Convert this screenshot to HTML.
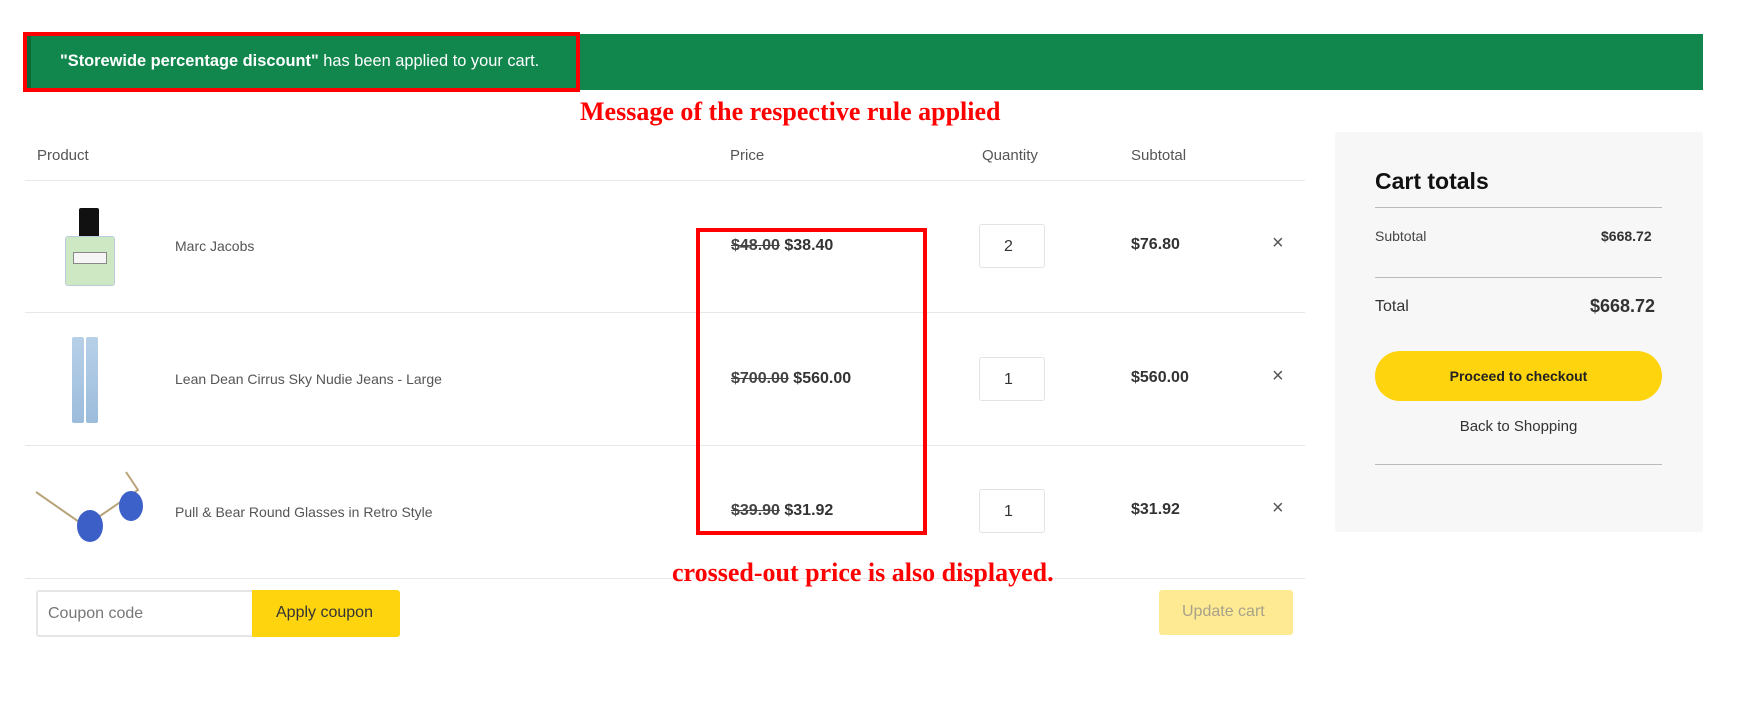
<!DOCTYPE html>
<html><head><meta charset="utf-8"><style>
*{box-sizing:border-box;margin:0;padding:0}
body{width:1757px;height:718px;background:#fff;font-family:"Liberation Sans",sans-serif;color:#444;position:relative;overflow:hidden}
.a{position:absolute;white-space:nowrap}
.bar{left:25px;top:34px;width:1678px;height:56px;background:#11864d;border-left:6px solid #0b6a3c}
.red{border:4px solid #f00}
.h{font-size:15px;color:#555;top:147px}
.line{position:absolute;height:1px;background:#e8e8e8}
.name{font-size:14px;color:#555}
.price{font-size:16px;font-weight:bold;color:#333}
.price s{color:#444}
.qty{width:66px;height:44px;border:1px solid #e3e3e3;border-radius:3px;font-size:16px;color:#333;padding:13px 0 0 24px}
.x{font-size:20px;color:#555}
.ann{font-family:"Liberation Serif",serif;font-weight:bold;color:#f00;font-size:26px}
</style></head><body>
<div class="a bar"></div>
<div class="a red" style="left:23px;top:32px;width:557px;height:60px"></div>
<div class="a" style="left:60px;top:52px;font-size:16.4px;color:#fff"><b>"Storewide percentage discount"</b> has been applied to your cart.</div>
<div class="a ann" style="left:580px;top:97px">Message of the respective rule applied</div>

<div class="a h" style="left:37px">Product</div>
<div class="a h" style="left:730px">Price</div>
<div class="a h" style="left:982px">Quantity</div>
<div class="a h" style="left:1131px">Subtotal</div>
<div class="line" style="left:25px;top:180px;width:1280px"></div>
<div class="line" style="left:25px;top:312px;width:1280px"></div>
<div class="line" style="left:25px;top:445px;width:1280px"></div>
<div class="line" style="left:25px;top:578px;width:1280px"></div>

<div class="a" style="left:79px;top:208px;width:20px;height:28px;background:#111;border-radius:2px 2px 0 0"></div>
<div class="a" style="left:65px;top:236px;width:50px;height:50px;background:#cfe8c4;border:1px solid #bcd;border-radius:3px"></div>
<div class="a" style="left:73px;top:252px;width:34px;height:12px;border:1px solid #888;background:#f5f5f5"></div>
<div class="a" style="left:72px;top:337px;width:12px;height:86px;background:linear-gradient(#b7d0e8,#9cbcdc);border-radius:2px"></div>
<div class="a" style="left:86px;top:337px;width:12px;height:86px;background:linear-gradient(#b7d0e8,#9cbcdc);border-radius:2px"></div>
<svg class="a" style="left:34px;top:468px" width="110" height="76"><path d="M2 24 L48 56 M66 48 L104 22 L92 4" stroke="#b9a47a" stroke-width="2" fill="none"/><ellipse cx="56" cy="58" rx="13" ry="16" fill="#3b5fc7"/><ellipse cx="97" cy="38" rx="12" ry="15" fill="#3c62c9"/></svg>

<div class="a name" style="left:175px;top:238px">Marc Jacobs</div>
<div class="a name" style="left:175px;top:371px">Lean Dean Cirrus Sky Nudie Jeans - Large</div>
<div class="a name" style="left:175px;top:504px">Pull &amp; Bear Round Glasses in Retro Style</div>

<div class="a price" style="left:731px;top:237px"><s>$48.00</s> $38.40</div>
<div class="a price" style="left:731px;top:370px"><s>$700.00</s> $560.00</div>
<div class="a price" style="left:731px;top:502px"><s>$39.90</s> $31.92</div>
<div class="a red" style="left:696px;top:228px;width:231px;height:307px"></div>

<div class="a qty" style="left:979px;top:224px">2</div>
<div class="a qty" style="left:979px;top:357px">1</div>
<div class="a qty" style="left:979px;top:489px">1</div>
<div class="a price" style="left:1131px;top:236px">$76.80</div>
<div class="a price" style="left:1131px;top:369px">$560.00</div>
<div class="a price" style="left:1131px;top:501px">$31.92</div>
<div class="a x" style="left:1272px;top:232px">×</div>
<div class="a x" style="left:1272px;top:365px">×</div>
<div class="a x" style="left:1272px;top:497px">×</div>

<div class="a ann" style="left:672px;top:558px">crossed-out price is also displayed.</div>

<div class="a" style="left:36px;top:590px;width:218px;height:47px;border:2px solid #e6e6e6;border-radius:3px 0 0 3px;font-size:16px;color:#777;padding:13px 0 0 10px">Coupon code</div>
<div class="a" style="left:252px;top:590px;width:148px;height:47px;background:#fed40f;border-radius:0 3px 3px 0;font-size:16px;color:#333;padding:14px 0 0 24px">Apply coupon</div>
<div class="a" style="left:1159px;top:590px;width:134px;height:45px;background:#ffea94;border-radius:3px;font-size:16px;color:#a8a28a;padding:13px 0 0 23px">Update cart</div>

<div class="a" style="left:1335px;top:132px;width:368px;height:400px;background:#f7f7f7;border-radius:3px"></div>
<div class="a" style="left:1375px;top:168px;font-size:23px;font-weight:bold;color:#111">Cart totals</div>
<div class="line" style="left:1375px;top:207px;width:287px;background:#bbb"></div>
<div class="a" style="left:1375px;top:228px;font-size:14px;color:#444">Subtotal</div>
<div class="a" style="left:1601px;top:228px;font-size:14px;font-weight:bold;color:#333">$668.72</div>
<div class="line" style="left:1375px;top:277px;width:287px;background:#bbb"></div>
<div class="a" style="left:1375px;top:298px;font-size:16px;color:#333">Total</div>
<div class="a" style="left:1590px;top:296px;font-size:18px;font-weight:bold;color:#333">$668.72</div>
<div class="a" style="left:1375px;top:351px;width:287px;height:50px;background:#fed40f;border-radius:25px;font-size:14px;font-weight:bold;color:#222;text-align:center;line-height:50px">Proceed to checkout</div>
<div class="a" style="left:1375px;top:418px;width:287px;text-align:center;font-size:15px;color:#333">Back to Shopping</div>
<div class="line" style="left:1375px;top:464px;width:287px;background:#bbb"></div>
</body></html>
